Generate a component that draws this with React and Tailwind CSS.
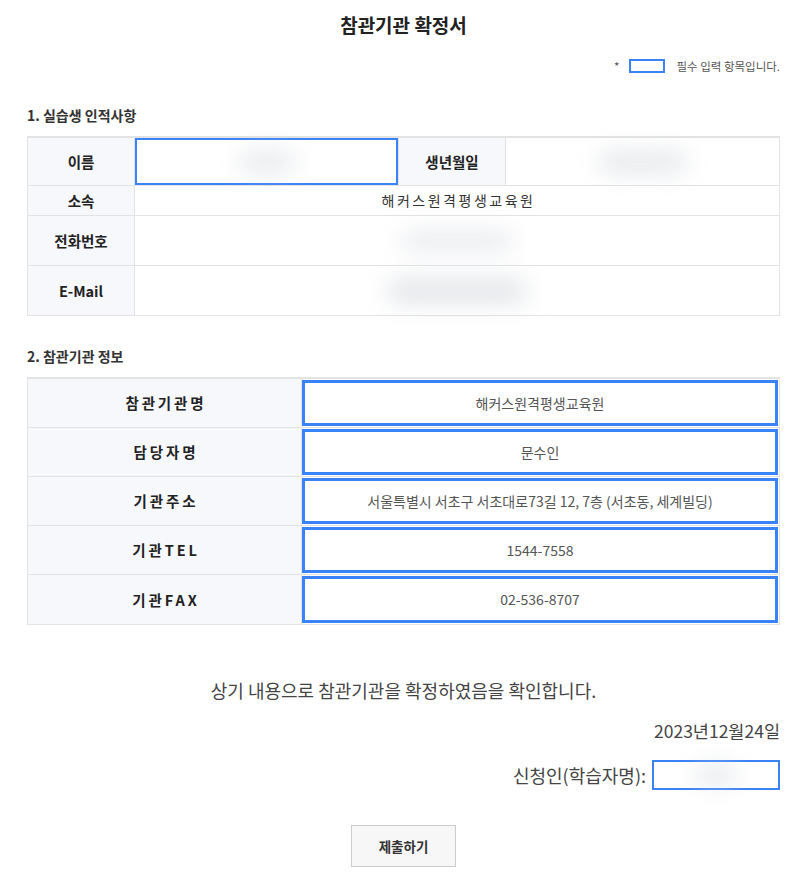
import React from 'react';

const font = { fontFamily: '"Noto Sans CJK KR", "Noto Sans", sans-serif' };

const Blur = ({ className }) => (
  <div className={`bg-gray-300/70 blur-md rounded-full ${className}`} />
);

const Label = ({ children, className = '' }) => (
  <div
    className={`flex items-center justify-center bg-[#f7f8fc] text-[14.5px] font-bold text-[#222] border-r border-[#e3e3e3] ${className}`}
  >
    {children}
  </div>
);

const orgRows = [
  ['참관기관명', '해커스원격평생교육원'],
  ['담당자명', '문수인'],
  ['기관주소', '서울특별시 서초구 서초대로73길 12, 7층 (서초동, 세계빌딩)'],
  ['기관TEL', '1544-7558'],
  ['기관FAX', '02-536-8707'],
];

export default function App() {
  return (
    <div style={font} className="w-[800px] min-h-[882px] bg-white pl-[27px] pr-[20px] pt-[11px] pb-4 text-[#333]">
      <h1 className="text-center text-[19px] font-bold leading-[27px] text-[#222]">참관기관 확정서</h1>

      <div className="mt-[19px] flex items-center justify-end text-[11.5px] leading-[18px] text-[#555]">
        <span>*</span>
        <span className="ml-[10px] h-[14px] w-[36px] border-2 border-[#3a82f7]" />
        <span className="ml-[11px]">필수 입력 항목입니다.</span>
      </div>

      <h2 className="mt-[30px] text-[14px] font-bold leading-[20px] text-[#333]">1. 실습생 인적사항</h2>

      <div className="mt-[11px] border-t-2 border-x border-b border-[#e3e3e3]">
        <div className="grid h-[48px] grid-cols-[107px_263px_108px_1fr] border-b border-[#e3e3e3]">
          <Label>이름</Label>
          <div className="flex items-center justify-center border-2 border-[#3a82f7]">
            <Blur className="h-[16px] w-[56px]" />
          </div>
          <Label className="border-l border-[#e3e3e3]">생년월일</Label>
          <div className="flex items-center justify-center">
            <Blur className="h-[18px] w-[88px]" />
          </div>
        </div>
        <div className="grid h-[30px] grid-cols-[107px_1fr] border-b border-[#e3e3e3]">
          <Label>소속</Label>
          <div className="flex items-center justify-center pl-[3px] text-[14px] tracking-[0.18em] text-[#333]">해커스원격평생교육원</div>
        </div>
        <div className="grid h-[50px] grid-cols-[107px_1fr] border-b border-[#e3e3e3]">
          <Label>전화번호</Label>
          <div className="flex items-center justify-center">
            <Blur className="h-[14px] w-[110px]" />
          </div>
        </div>
        <div className="grid h-[49px] grid-cols-[107px_1fr]">
          <Label>E-Mail</Label>
          <div className="flex items-center justify-center">
            <Blur className="h-[22px] w-[140px]" />
          </div>
        </div>
      </div>

      <h2 className="mt-[30px] text-[14px] font-bold leading-[20px] text-[#333]">2. 참관기관 정보</h2>

      <div className="mt-[11px] border-t-2 border-x border-b border-[#e3e3e3]">
        {orgRows.map(([label, value], i) => (
          <div
            key={label}
            className={`grid h-[49px] grid-cols-[274px_1fr] ${i < orgRows.length - 1 ? 'border-b border-[#e3e3e3]' : ''}`}
          >
            <Label className="pl-[3px] tracking-[0.2em]">{label}</Label>
            <div className="flex items-center py-px pr-px">
              <div className="flex h-full w-full items-center justify-center border-[3px] border-[#3a82f7] text-[14px] text-[#555]">
                {value}
              </div>
            </div>
          </div>
        ))}
      </div>

      <p className="mt-[52px] text-center text-[18px] leading-[26px] text-[#444]">상기 내용으로 참관기관을 확정하였음을 확인합니다.</p>

      <p className="mt-[16px] text-right text-[17.5px] leading-[24px] text-[#444]">2023년12월24일</p>

      <div className="mt-[17px] flex items-center justify-end gap-[6px] text-[18px] text-[#444]">
        <span>신청인(학습자명):</span>
        <div className="flex h-[30px] w-[128px] items-center justify-center border-2 border-[#3a82f7]">
          <Blur className="h-[16px] w-[40px]" />
        </div>
      </div>

      <div className="mt-[35px] flex justify-center">
        <button className="h-[42px] w-[105px] border border-[#ccc] bg-[#f7f7f7] text-[13.5px] font-bold text-[#333]">제출하기</button>
      </div>
    </div>
  );
}
